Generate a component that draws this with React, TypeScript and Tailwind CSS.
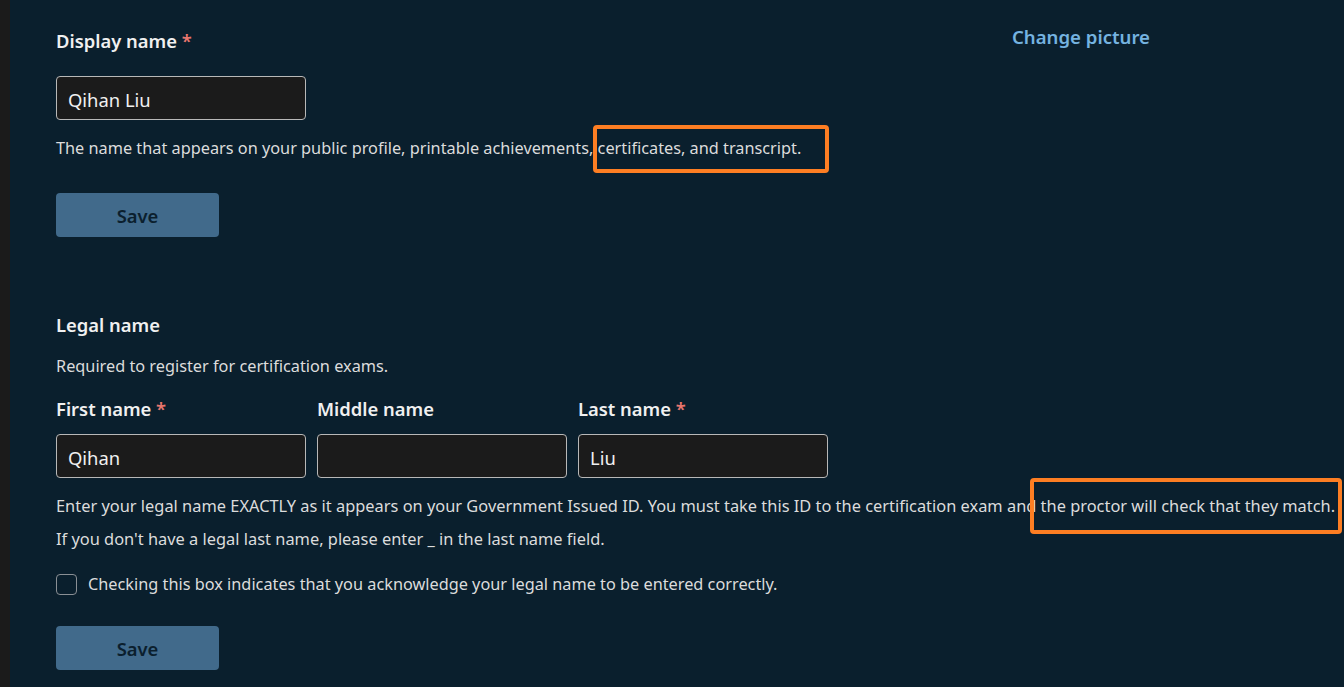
export default function App() {
  const label = 'text-[18.4px] font-semibold text-[#f0f0f0] leading-6'
  const input =
    'h-[44px] w-[250px] rounded-[4px] border border-[#b8b8b8] bg-[#1b1b1b] px-[11px] pt-[3px] text-[18.4px] text-[#f0f0f0] outline-none'
  const help = 'text-[16.3px] text-[#dcdcdc] leading-6'
  const save =
    'h-[44px] w-[163px] rounded-[4px] bg-[#416a8b] pt-[2px] text-[18.4px] font-semibold text-[#0b1f2e]'
  const req = <span className="text-[#e8766e]"> *</span>

  return (
    <div
      className="flex h-[687px] w-[1344px] overflow-hidden bg-[#0a1f2d]"
      style={{ fontFamily: '"Noto Sans", "Open Sans", sans-serif' }}
    >
      <div className="w-[10px] shrink-0 bg-[#1b1b1b]" />
      <div className="relative flex-1 pl-[46px]">
        <div className="flex items-start justify-between pr-[194px] pt-[29px]">
          <div className={label}>Display name{req}</div>
          <button className="-mt-[4px] text-[18.6px] font-semibold leading-6 text-[#75b3e0]">Change picture</button>
        </div>
        <input className={`${input} mt-[23px] block`} defaultValue="Qihan Liu" />
        <p className={`${help} mt-[16px]`}>
          The name that appears on your public profile, printable achievements, certificates, and transcript.
        </p>
        <button className={`${save} mt-[33px] block`}>Save</button>

        <div className={`${label} mt-[76px]`}>Legal name</div>
        <p className={`${help} mt-[17px]`}>Required to register for certification exams.</p>

        <div className="mt-[19px] flex gap-[11px]">
          {[
            ['First name', 'Qihan', true],
            ['Middle name', '', false],
            ['Last name', 'Liu', true],
          ].map(([name, value, r]) => (
            <div key={name as string}>
              <div className={label}>
                {name as string}
                {r ? req : null}
              </div>
              <input className={`${input} mt-[13px] block`} defaultValue={value as string} />
            </div>
          ))}
        </div>

        <p className={`${help} mt-[11px] text-[16.4px] leading-[33px]`}>
          Enter your legal name EXACTLY as it appears on your Government Issued ID. You must take this ID to the certification exam and the proctor will check that they match.
          <br />
          If you don't have a legal last name, please enter _ in the last name field.
        </p>

        <label className="mt-[17px] flex items-center gap-[11px]">
          <span className="h-[21px] w-[21px] rounded-[4px] border border-[#8a8f94]" />
          <span className={help}>Checking this box indicates that you acknowledge your legal name to be entered correctly.</span>
        </label>

        <button className={`${save} mt-[30px] block`}>Save</button>

        <div className="absolute left-[583px] top-[125px] h-[48px] w-[236px] rounded-[4px] border-[4px] border-[#fd7e23]" />
        <div className="absolute left-[1020px] top-[478px] h-[56px] w-[312px] rounded-[4px] border-[4px] border-[#fd7e23]" />
      </div>
    </div>
  )
}
